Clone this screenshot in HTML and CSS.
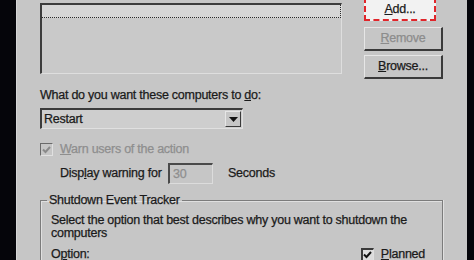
FILE: index.html
```html
<!DOCTYPE html>
<html>
<head>
<meta charset="utf-8">
<link rel="stylesheet" href="styles.css">
</head>
<body>
<div class="screen">
  <div class="dialog">
    <div class="top">
      <div class="listbox"><div class="row"></div></div>
      <div class="btns">
        <div class="btn add"><span><u>A</u>dd...</span></div>
        <div class="btn off"><span><u>R</u>emove</span></div>
        <div class="btn"><span><u>B</u>rowse...</span></div>
      </div>
    </div>
    <div class="label">What do you want these computers to <u>d</u>o:</div>
    <div class="combo">
      <span class="value">Restart</span>
      <span class="arrow"><svg width="9" height="5" viewBox="0 0 9 5"><path d="M0 0H9L4.5 5Z" fill="#111"/></svg></span>
    </div>
    <div class="check off">
      <span class="box"><svg width="9" height="8" viewBox="0 0 9 8"><path d="M1 3.5L3.5 6L8 1" fill="none" stroke="#8a8a8a" stroke-width="2"/></svg></span>
      <span><u>W</u>arn users of the action</span>
    </div>
    <div class="warnrow">
      <span class="wlabel">Disp<u>l</u>ay warning for</span>
      <span class="input">30</span>
      <span class="secs">Seconds</span>
    </div>
    <fieldset class="group">
      <legend>Shutdown Event Tracker</legend>
      <p class="desc">Select the option that best describes why you want to shutdown the computers</p>
      <div class="optrow">
        <span>O<u>p</u>tion:</span>
        <span class="planned">
          <span class="box light"><svg width="9" height="8" viewBox="0 0 9 8"><path d="M1 3.5L3.5 6L8 1" fill="none" stroke="#111" stroke-width="2"/></svg></span>
          <span><u>P</u>lanned</span>
        </span>
      </div>
    </fieldset>
  </div>
</div>
</body>
</html>
```

FILE: styles.css
```css
html, body {
  margin: 0;
  padding: 0;
  background: #000;
}
.screen {
  display: flex;
  height: 260px;
  overflow: hidden;
  background: #05050a;
}
.dialog {
  margin-left: 16px;
  width: 451px;
  height: 260px;
  box-sizing: border-box;
  background: #c6c6c6;
  border-left: 1px solid #d6d6d6;
  padding-left: 23px;
  font-family: "Liberation Sans", Arial, sans-serif;
  font-size: 12.5px;
  letter-spacing: -0.25px;
  color: #1a1a1a;
  -webkit-text-stroke: 0.25px currentColor;
  line-height: 15px;
}
u {
  text-decoration-thickness: 1px;
  text-underline-offset: 1px;
}
.top {
  display: flex;
  align-items: flex-start;
  height: 79px;
}
.listbox {
  margin-top: 3px;
  width: 302px;
  height: 71px;
  box-sizing: border-box;
  border-top: 2px solid #3c3c3c;
  border-left: 2px solid #3c3c3c;
  border-right: 1px solid #dedede;
  border-bottom: 1px solid #dedede;
  background: #c9c9c9;
}
.row {
  height: 12px;
  background: #d6d6d6;
  border: 1px dotted #2a2a2a;
  border-top: none;
  border-left: none;
}
.btns {
  margin-left: 22px;
  margin-top: -3px;
  display: flex;
  flex-direction: column;
}
.btn {
  width: 79px;
  height: 24px;
  box-sizing: border-box;
  display: flex;
  align-items: center;
  justify-content: center;
  background: #c6c6c6;
  border-top: 1px solid #e6e6e6;
  border-left: 1px solid #e6e6e6;
  border-right: 2px solid #3a3a3a;
  border-bottom: 2px solid #3a3a3a;
  margin-top: 4px;
}
.btn.add {
  width: 72px;
  margin-top: 0;
  background: #f2f2f2;
  border: 2px dashed #e0252a;
}
.btn.off {
  margin-top: 6px;
  color: #8c8c8c;
}
.label {
  margin-top: 9px;
}
.combo {
  margin-top: 5px;
  width: 203px;
  height: 21px;
  box-sizing: border-box;
  display: flex;
  align-items: center;
  border-top: 2px solid #3c3c3c;
  border-left: 2px solid #3c3c3c;
  border-right: 1px solid #e0e0e0;
  border-bottom: 1px solid #e0e0e0;
  background: #cecece;
}
.value {
  flex: 1;
  padding-left: 2px;
}
.arrow {
  width: 16px;
  height: 16px;
  box-sizing: border-box;
  display: flex;
  align-items: center;
  justify-content: center;
  background: #c6c6c6;
  border-right: 1px solid #3a3a3a;
  border-bottom: 1px solid #3a3a3a;
  border-top: 1px solid #e6e6e6;
  border-left: 1px solid #e6e6e6;
  margin-right: 1px;
}
.check {
  margin-top: 13px;
  display: flex;
  align-items: center;
  gap: 7px;
}
.check.off {
  color: #8e8e8e;
}
.box {
  width: 13px;
  height: 13px;
  box-sizing: border-box;
  display: flex;
  align-items: center;
  justify-content: center;
  border-top: 1px solid #6a6a6a;
  border-left: 1px solid #6a6a6a;
  border-right: 1px solid #e0e0e0;
  border-bottom: 1px solid #e0e0e0;
  background: #c6c6c6;
}
.box.light {
  background: #dcdcdc;
  border-top: 2px solid #3a3a3a;
  border-left: 2px solid #3a3a3a;
}
.warnrow {
  margin-top: 6px;
  padding-left: 20px;
  display: flex;
  align-items: center;
}
.wlabel {
  width: 108px;
  white-space: nowrap;
}
.input {
  width: 45px;
  height: 21px;
  box-sizing: border-box;
  display: flex;
  align-items: center;
  padding-left: 3px;
  color: #8e8e8e;
  border-top: 2px solid #4a4a4a;
  border-left: 2px solid #4a4a4a;
  border-right: 1px solid #dcdcdc;
  border-bottom: 1px solid #dcdcdc;
  background: #c6c6c6;
}
.secs {
  margin-left: 15px;
}
.group {
  margin: 9px 0 0 0;
  width: 403px;
  box-sizing: border-box;
  padding: 0 17px 0 10px;
  border: none;
  border-top: 1px solid #7c7c7c;
  border-left: 1px solid #7c7c7c;
  border-right: 1px solid #7c7c7c;
  box-shadow: inset 1px 1px #e0e0e0, 1px 0 #e0e0e0;
  min-inline-size: 0;
}
.group legend {
  margin-left: -4px;
  padding: 0 2px;
}
.desc {
  margin: 6px 0 0 0;
  line-height: 13px;
}
.optrow {
  margin-top: 7px;
  display: flex;
  align-items: center;
  justify-content: space-between;
}
.planned {
  display: flex;
  align-items: center;
  gap: 7px;
}
```
